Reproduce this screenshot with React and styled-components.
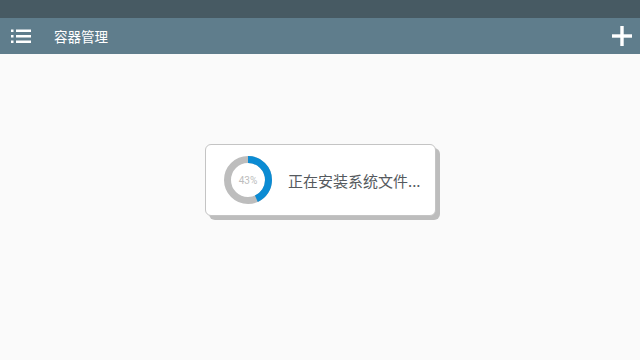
import React from 'react';
import styled, { createGlobalStyle } from 'styled-components';

const GlobalStyle = createGlobalStyle`
  html, body {
    margin: 0;
    padding: 0;
    background: #fafafa;
    font-family: Roboto, "Noto Sans CJK SC", sans-serif;
  }
`;

const Screen = styled.div`
  width: 640px;
  height: 360px;
  display: flex;
  flex-direction: column;
  background: #fafafa;
  overflow: hidden;
`;

const StatusBar = styled.div`
  height: 18px;
  background: #475a63;
`;

const Toolbar = styled.div`
  height: 36px;
  background: #5f7d8c;
  display: flex;
  align-items: center;
  padding: 0 8px 0 11px;
`;

const IconButton = styled.div`
  display: flex;
  align-items: center;
  justify-content: center;
`;

const Title = styled.div`
  flex: 1;
  margin-left: 23px;
  color: #ffffff;
  font-size: 13.5px;
  font-family: "Noto Sans CJK SC", sans-serif;
`;

const Content = styled.div`
  flex: 1;
  display: flex;
  align-items: center;
  justify-content: center;
  padding-bottom: 54px;
`;

const Dialog = styled.div`
  box-sizing: border-box;
  width: 231px;
  height: 72px;
  margin-left: 1px;
  border: 1px solid #c4c4c4;
  border-radius: 6px;
  background: #ffffff;
  box-shadow: 4px 4px 0 #bdbdbd;
  display: flex;
  align-items: center;
  padding-left: 18px;
`;

const Ring = styled.div`
  position: relative;
  flex-shrink: 0;
  width: 48px;
  height: 48px;
`;

const RingLabel = styled.span`
  position: absolute;
  inset: 0;
  display: flex;
  align-items: center;
  justify-content: center;
  font-size: 10px;
  color: #bdbdbd;
`;

const Message = styled.div`
  margin-left: 16px;
  font-size: 15px;
  color: #555a5e;
  white-space: nowrap;
  font-family: "Noto Sans CJK SC", sans-serif;
`;

const MenuIcon = () => (
  <svg width="20" height="16" viewBox="0 0 20 16">
    <rect x="0" y="1.5" width="2.5" height="2.5" fill="#fff" />
    <rect x="0" y="7" width="2.5" height="2.5" fill="#fff" />
    <rect x="0" y="12.5" width="2.5" height="2.5" fill="#fff" />
    <rect x="5" y="1.5" width="15" height="2.5" fill="#fff" />
    <rect x="5" y="7" width="15" height="2.5" fill="#fff" />
    <rect x="5" y="12.5" width="15" height="2.5" fill="#fff" />
  </svg>
);

const PlusIcon = () => (
  <svg width="20" height="20" viewBox="0 0 20 20">
    <rect x="8.3" y="0" width="3.4" height="20" fill="#fff" />
    <rect x="0" y="8.3" width="20" height="3.4" fill="#fff" />
  </svg>
);

const Progress = ({ value }) => {
  const r = 20.5;
  const c = 2 * Math.PI * r;
  return (
    <Ring>
      <svg width="48" height="48" viewBox="0 0 48 48">
        <circle cx="24" cy="24" r={r} fill="none" stroke="#bdbdbd" strokeWidth="7" />
        <circle
          cx="24"
          cy="24"
          r={r}
          fill="none"
          stroke="#0b8bd3"
          strokeWidth="7"
          strokeDasharray={`${(c * value) / 100} ${c}`}
          transform="rotate(-90 24 24)"
        />
      </svg>
      <RingLabel>{value}%</RingLabel>
    </Ring>
  );
};

export default function App() {
  return (
    <>
      <GlobalStyle />
      <Screen>
        <StatusBar />
        <Toolbar>
          <IconButton>
            <MenuIcon />
          </IconButton>
          <Title>容器管理</Title>
          <IconButton>
            <PlusIcon />
          </IconButton>
        </Toolbar>
        <Content>
          <Dialog>
            <Progress value={43} />
            <Message>正在安装系统文件...</Message>
          </Dialog>
        </Content>
      </Screen>
    </>
  );
}
